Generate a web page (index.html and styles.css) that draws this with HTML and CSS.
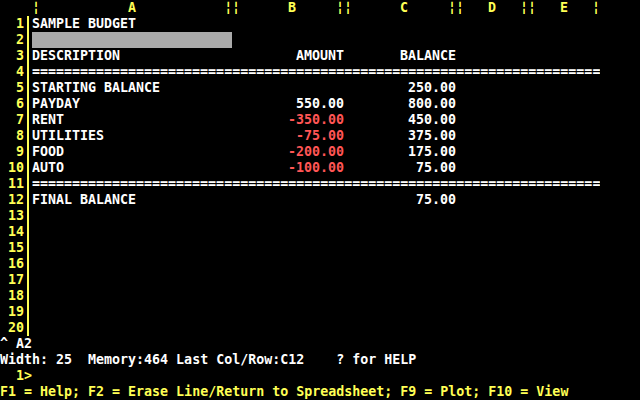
FILE: index.html
```html
<!DOCTYPE html>
<html>
<head>
<meta charset="utf-8">
<link rel="stylesheet" href="styles.css">
</head>
<body>
<div class="screen">
  <div class="row head">
    <span class="num"></span><span class="bar none"></span>
    <span class="cell">¦           A           ¦</span>
    <span class="cell">¦      B     ¦</span>
    <span class="cell">¦      C     ¦</span>
    <span class="cell">¦   D   ¦</span>
    <span class="cell">¦   E   ¦</span>
  </div>
  <div class="row"><span class="num">1</span><span class="bar"></span><span class="cell">SAMPLE BUDGET</span></div>
  <div class="row"><span class="num">2</span><span class="bar"></span><span class="cell cursor"></span></div>
  <div class="row"><span class="num">3</span><span class="bar"></span><span class="cell">DESCRIPTION</span><span class="cell r">AMOUNT</span><span class="cell r">BALANCE</span></div>
  <div class="row"><span class="num">4</span><span class="bar"></span><span class="cell rule">=======================================================================</span></div>
  <div class="row"><span class="num">5</span><span class="bar"></span><span class="cell">STARTING BALANCE</span><span class="cell r"></span><span class="cell r">250.00</span></div>
  <div class="row"><span class="num">6</span><span class="bar"></span><span class="cell">PAYDAY</span><span class="cell r">550.00</span><span class="cell r">800.00</span></div>
  <div class="row"><span class="num">7</span><span class="bar"></span><span class="cell">RENT</span><span class="cell r neg">-350.00</span><span class="cell r">450.00</span></div>
  <div class="row"><span class="num">8</span><span class="bar"></span><span class="cell">UTILITIES</span><span class="cell r neg">-75.00</span><span class="cell r">375.00</span></div>
  <div class="row"><span class="num">9</span><span class="bar"></span><span class="cell">FOOD</span><span class="cell r neg">-200.00</span><span class="cell r">175.00</span></div>
  <div class="row"><span class="num">10</span><span class="bar"></span><span class="cell">AUTO</span><span class="cell r neg">-100.00</span><span class="cell r">75.00</span></div>
  <div class="row"><span class="num">11</span><span class="bar"></span><span class="cell rule">=======================================================================</span></div>
  <div class="row"><span class="num">12</span><span class="bar"></span><span class="cell">FINAL BALANCE</span><span class="cell r"></span><span class="cell r">75.00</span></div>
  <div class="row"><span class="num">13</span><span class="bar"></span></div>
  <div class="row"><span class="num">14</span><span class="bar"></span></div>
  <div class="row"><span class="num">15</span><span class="bar"></span></div>
  <div class="row"><span class="num">16</span><span class="bar"></span></div>
  <div class="row"><span class="num">17</span><span class="bar"></span></div>
  <div class="row"><span class="num">18</span><span class="bar"></span></div>
  <div class="row"><span class="num">19</span><span class="bar"></span></div>
  <div class="row"><span class="num">20</span><span class="bar"></span></div>
  <div class="line">^ A2</div>
  <div class="line">Width: 25  Memory:464 Last Col/Row:C12    ? for HELP</div>
  <div class="line yellow">  1&gt;</div>
  <div class="line yellow">F1 = Help; F2 = Erase Line/Return to Spreadsheet; F9 = Plot; F10 = View</div>
</div>
</body>
</html>
```
FILE: styles.css
```css
html, body {
  margin: 0;
  padding: 0;
  background: #000;
}
.screen {
  width: 640px;
  height: 400px;
  background: #000;
  color: #fff;
  font-family: "DejaVu Sans Mono", "Liberation Mono", monospace;
  font-weight: bold;
  font-size: 13.3px;
  line-height: 16px;
  overflow: hidden;
  display: flex;
  flex-direction: column;
}
.row {
  display: grid;
  grid-template-columns: 24px 8px 200px 112px 112px 72px 72px;
  height: 16px;
}
.cell {
  white-space: pre;
  overflow: hidden;
}
.head {
  color: #ffff55;
}
.num {
  color: #ffff55;
  text-align: right;
}
.bar {
  position: relative;
}
.bar::before {
  content: "";
  display: block;
  margin-left: 3px;
  width: 2px;
  height: 16px;
  background: #ffff55;
}
.bar.none::before {
  display: none;
}
.r {
  text-align: right;
}
.neg {
  color: #ff5555;
}
.cursor {
  background: #aaaaaa;
}
.rule {
  grid-column: 3 / 8;
}
.line {
  white-space: pre;
  height: 16px;
}
.yellow {
  color: #ffff55;
}
```
